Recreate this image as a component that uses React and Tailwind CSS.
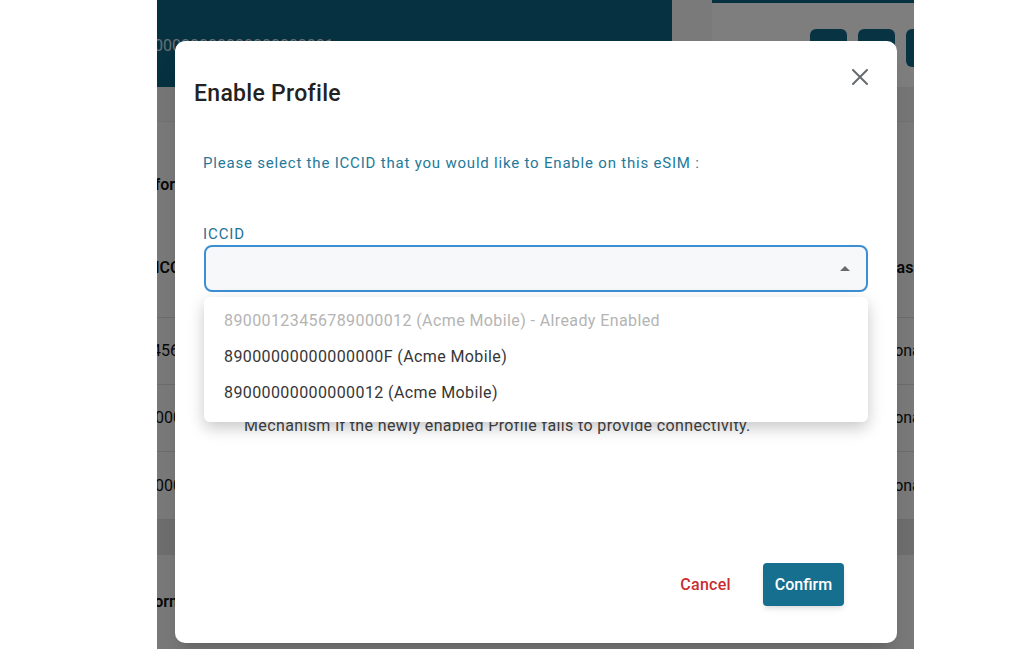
import React from "react";

const rows = [
  { left: "Information", right: "", h: "h-[125px]", bold: true, ml: "-ml-[16px]" },
  { left: "ICCID", right: "Class", h: "h-[42px]", bold: true, ml: "-ml-[2px]" },
  { left: "", right: "", h: "h-[29px]" },
  { left: "89000123456789000012", right: "Personal", h: "h-[67px]", ml: "-ml-[77px]" },
  { left: "89000000000000000F", right: "Personal", h: "h-[67px]", ml: "-ml-[20px]" },
  { left: "89000000000000012", right: "Personal", h: "h-[68px]", ml: "-ml-[20px]" },
];

const options = [
  { label: "89000123456789000012 (Acme Mobile) - Already Enabled", disabled: true },
  { label: "89" + "0".repeat(15) + "F (Acme Mobile)" },
  { label: "89" + "0".repeat(13) + "12 (Acme Mobile)" },
];

const App = () => {
  return (
    <div className="flex h-[649px] w-[1024px] overflow-hidden bg-white font-['Roboto',sans-serif]">
      <div className="w-[157px] shrink-0" />
      <div className="relative w-[757px] shrink-0 overflow-hidden bg-[#f2f2f2]">
        {/* page behind the dialog */}
        <div className="flex h-[87px]">
          <div className="w-[515px] shrink-0 bg-[#0b6280] pt-[34px] text-[16px] text-[#d4dde2]">
            <span className="-ml-[12px] whitespace-nowrap">000000000000000000001</span>
          </div>
          <div className="w-[40px] shrink-0 bg-[#f4f4f4]" />
          <div className="flex min-w-0 flex-1 gap-[11px] border-t-[3px] border-[#0b6280] bg-[#fcfcfc] pl-[98px] pt-[26px]">
            <div className="h-[38px] w-[37px] shrink-0 rounded-md bg-[#0f6787]" />
            <div className="h-[38px] w-[37px] shrink-0 rounded-md bg-[#0f6787]" />
            <div className="h-[38px] w-[37px] shrink-0 rounded-md bg-[#0f6787]" />
          </div>
        </div>
        <div className="h-[35px] border-b border-[#e2e2e2] bg-[#ececec]" />
        {rows.map((r, i) => (
          <div
            key={i}
            className={`flex items-center text-[16px] text-[#111] ${r.left ? "" : "border-b border-[#d9d9d9]"} ${i > 2 ? "border-b border-[#d9d9d9]" : ""} ${r.h} ${r.bold ? "font-semibold" : ""}`}
          >
            <div className="w-[725px] shrink-0 whitespace-nowrap">
              <span className={r.ml}>{r.left}</span>
            </div>
            <div className="whitespace-nowrap">
              <span className={r.bold ? "" : "-ml-[20px]"}>{r.right}</span>
            </div>
          </div>
        ))}
        <div className="h-[35px] bg-[#dcdcdc]" />
        <div className="flex h-[94px] items-center text-[16px] font-semibold text-[#111]">
          <span className="-ml-[22px] whitespace-nowrap">Information</span>
        </div>

        <div className="absolute inset-0 bg-black/50" />

        {/* dialog */}
        <div className="absolute left-[18px] top-[41px] flex h-[602px] w-[722px] flex-col rounded-[10px] bg-white px-[29px] pb-[37px] pt-[39px] shadow-xl">
          <div className="flex items-start justify-between">
            <h2 className="-ml-[10px] text-[23px] font-medium leading-[28px] tracking-[0.3px] text-[#222]">
              Enable Profile
            </h2>
            <button className="-mr-[4px] -mt-[15px] p-[4px] text-[#666b70]">
              <svg width="16" height="16" viewBox="0 0 16 16" fill="none" stroke="currentColor" strokeWidth="2" strokeLinecap="round">
                <path d="M1 1 L15 15 M15 1 L1 15" />
              </svg>
            </button>
          </div>

          <p className="-ml-px mt-[43px] text-[15px] leading-[24px] tracking-[0.8px] text-[#23799a]">
            Please select the ICCID that you would like to Enable on this eSIM :
          </p>

          <label className="-ml-px mt-[49px] text-[15px] leading-[20px] tracking-[0.9px] text-[#1f7193]">ICCID</label>
          <div className="relative mt-px">
            <div className="flex h-[47px] items-center justify-end rounded-lg border-2 border-[#3c8fd3] bg-[#f6f8fa] pr-[15px]">
              <svg width="12" height="6" viewBox="0 0 12 6" className="mb-[2px]">
                <path d="M1 6 L6 1 L11 6 Z" fill="#6a6a6a" />
              </svg>
            </div>
            <div className="absolute left-0 right-0 top-[52px] z-10 rounded-md bg-white pb-[11px] pt-[6px] shadow-[0_6px_16px_rgba(0,0,0,0.22)]">
              {options.map((o) => (
                <div
                  key={o.label}
                  className={`flex h-[36px] items-center px-5 text-[16px] tracking-[0.4px] ${o.disabled ? "text-[#b4b4b4]" : "text-[#363636]"}`}
                >
                  {o.label}
                </div>
              ))}
            </div>
          </div>

          <p className="ml-[40px] mt-[122px] text-[16px] leading-[24px] tracking-[0.38px] text-[#444]">
            Mechanism if the newly enabled Profile fails to provide connectivity.
          </p>

          <div className="mt-auto flex items-center justify-end gap-[24px] pr-[24px]">
            <button className="px-2 text-[16px] font-medium tracking-[0.3px] text-[#c92d30]">Cancel</button>
            <button className="h-[43px] w-[81px] rounded bg-[#166f8e] text-[16px] font-medium text-white shadow-md">
              Confirm
            </button>
          </div>
        </div>
      </div>
      <div className="flex-1" />
    </div>
  );
};

export default App;
